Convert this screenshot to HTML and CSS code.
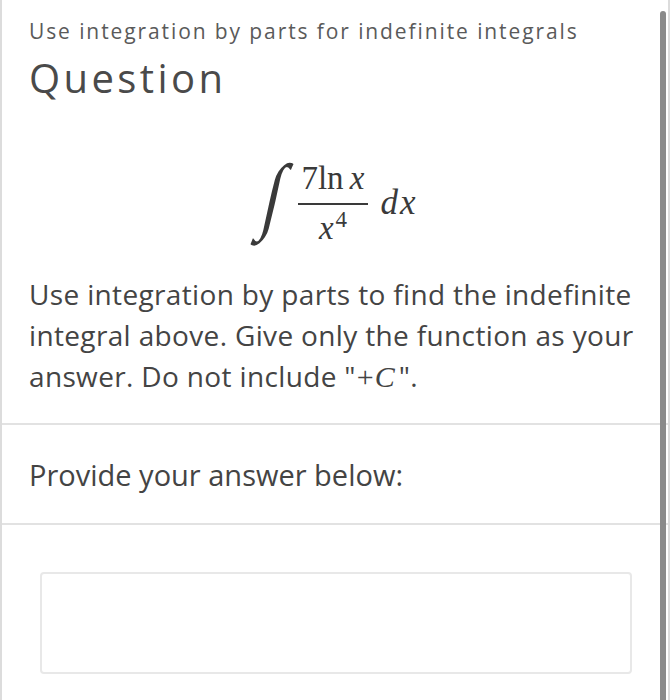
FILE: index.html
```html
<!DOCTYPE html>
<html lang="en">
<head>
  <meta charset="UTF-8">
  <title>Question</title>
  <meta name="viewport" content="width=device-width, initial-scale=1" />
  <link rel="stylesheet" href="styles.css">
</head>
<body>

  <div id="root">

    <div class="card">

      <section class="question">
        <div class="topic">Use integration by parts for indefinite integrals</div>
        <h1 class="heading">Question</h1>

        <div class="math">
          <span class="math-int">&#8747;</span>
          <span class="math-frac">
            <span class="math-num">7ln <i>x</i></span>
            <span class="math-den"><i>x</i><sup>4</sup></span>
          </span>
          <span class="math-dx"><i>dx</i></span>
        </div>

        <p class="prompt">
          Use integration by parts to find the indefinite integral above. Give
          only the function as your answer. Do not include "<span class="math-inline">+<i>C</i></span>".
        </p>
      </section>

      <section class="answer-label">
        Provide your answer below:
      </section>

      <section class="answer">
        <div class="answer-box"></div>
      </section>

    </div>

    <div class="scrollbar"></div>

  </div>

</body>
</html>
```

FILE: styles.css
```css
html,
body {
  margin: 0;
  padding: 0;
  background: #fff
}

body {
  font-family: "Open Sans", "Helvetica Neue", Helvetica, Arial, sans-serif;
  color: #444
}

#root {
  position: relative;
  width: 671px;
  height: 700px;
  overflow: hidden
}

.card {
  box-sizing: border-box;
  width: 670px;
  min-height: 700px;
  border-left: 2px solid #dcdcdc;
  border-right: 2px solid #dcdcdc
}

.scrollbar {
  position: absolute;
  top: 11px;
  left: 660px;
  width: 6px;
  height: 700px;
  border-radius: 3px 3px 0 0;
  background: #8a8a8a
}

/* question */

.question {
  padding: 17px 25px 26px 27px;
  border-bottom: 2px solid #e2e2e2
}

.topic {
  font-size: 21px;
  line-height: 28px;
  letter-spacing: 1.9px;
  color: #5a5a5a
}

.heading {
  margin: 9px 0 0;
  font-size: 40px;
  line-height: 48px;
  font-weight: 400;
  letter-spacing: 3.4px;
  color: #4a4a4a
}

.math {
  display: flex;
  justify-content: center;
  align-items: center;
  margin: 58px 0 0;
  padding-left: 2px;
  font-family: "Liberation Serif", "Times New Roman", serif;
  font-size: 33px;
  color: #3a3a3a
}

.math i {
  font-style: italic
}

.math-int {
  display: block;
  width: 30px;
  height: 84px;
  font-size: 66px;
  line-height: 84px;
  text-align: center;
  transform: translate(3px, -8px) scaleY(1.28) skewX(-16deg);
  font-weight: 400
}

.math-frac {
  display: inline-flex;
  flex-direction: column;
  align-items: center;
  margin-left: 12px
}

.math-num {
  display: block;
  padding: 0 3px 7px;
  line-height: 36px;
  word-spacing: -2px;
  border-bottom: 2px solid #3a3a3a
}

.math-den {
  display: block;
  padding-top: 5px;
  line-height: 36px
}

.math-den sup {
  font-size: 23px;
  line-height: 0;
  vertical-align: 12px;
  margin-left: 2px
}

.math-dx {
  display: block;
  margin-left: 13px;
  font-size: 35px;
  letter-spacing: 2px;
  line-height: 36px
}

.prompt {
  margin: 28px 0 0;
  font-size: 28px;
  line-height: 41px;
  letter-spacing: 0.35px;
  color: #444
}

.math-inline {
  display: inline-block;
  padding: 0 3px 0 1px;
  font-family: "Liberation Serif", "Times New Roman", serif;
  font-size: 30px;
  line-height: 30px;
  letter-spacing: 1px
}

/* answer */

.answer-label {
  padding: 30px 27px 28px;
  font-size: 29px;
  line-height: 40px;
  color: #444;
  border-bottom: 2px solid #e2e2e2
}

.answer {
  padding: 47px 36px 0 38px
}

.answer-box {
  height: 98px;
  border: 2px solid #e8e8e8;
  border-radius: 4px
}
```
